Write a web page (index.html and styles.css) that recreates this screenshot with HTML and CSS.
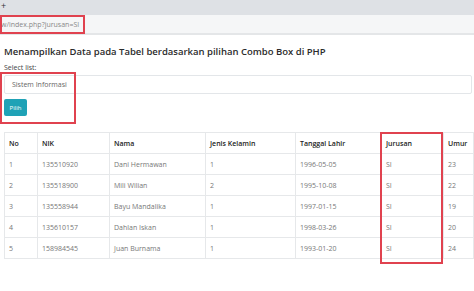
FILE: index.html
```html
<!DOCTYPE html>
<html>
<head>
<meta charset="utf-8">
<link rel="stylesheet" href="styles.css">
</head>
<body>
<div class="tabbar"><span class="plus">+</span></div>
<div class="addrbar"><span class="url">w/index.php?jurusan=SI</span></div>
<div class="page">
  <h4 class="title">Menampilkan Data pada Tabel berdasarkan pilihan Combo Box di PHP</h4>
  <div class="label">Select list:</div>
  <div class="select">Sistem Informasi</div>
  <div class="btn">Pilih</div>
  <table class="data">
    <thead>
      <tr><th class="c-no">No</th><th class="c-nik">NIK</th><th class="c-nama">Nama</th><th class="c-jk">Jenis Kelamin</th><th class="c-tgl">Tanggal Lahir</th><th class="c-jur">Jurusan</th><th class="c-umur">Umur</th></tr>
    </thead>
    <tbody>
      <tr><td>1</td><td>135510920</td><td>Dani Hermawan</td><td>1</td><td>1996-05-05</td><td>SI</td><td>23</td></tr>
      <tr><td>2</td><td>135518900</td><td>Mili Wilian</td><td>2</td><td>1995-10-08</td><td>SI</td><td>22</td></tr>
      <tr><td>3</td><td>135558944</td><td>Bayu Mandalika</td><td>1</td><td>1997-01-15</td><td>SI</td><td>19</td></tr>
      <tr><td>4</td><td>135610157</td><td>Dahlan Iskan</td><td>1</td><td>1998-03-26</td><td>SI</td><td>20</td></tr>
      <tr><td>5</td><td>158984545</td><td>Juan Burnama</td><td>1</td><td>1993-01-20</td><td>SI</td><td>24</td></tr>
    </tbody>
  </table>
</div>
<div class="hl hl-url"></div>
<div class="hl hl-select"></div>
<div class="hl hl-jur"></div>
</body>
</html>
```
FILE: styles.css
```css
html, body { margin: 0; padding: 0; background: #fff; }
body { font-family: "Open Sans", "Noto Sans", sans-serif; color: #212529; width: 474px; height: 291px; overflow: hidden; position: relative; }
.tabbar { height: 15px; background: #dee1e5; display: flex; align-items: flex-start; }
.plus { margin-left: 1px; margin-top: 1px; font-size: 9px; line-height: 9px; color: #333; }
.addrbar { height: 18px; background: #f5f6f7; border-bottom: 2px solid #e4e6e8; display: flex; align-items: center; }
.url { font-size: 7px; color: #888; padding-left: 1px; }
.page { padding: 8px 2px 0 4px; }
.title { margin: 0; font-size: 9.5px; font-weight: 600; line-height: 18px; color: #2b2b2b; }
.label { font-size: 7px; color: #444; margin-top: 2px; line-height: 9px; }
.select { margin-top: 3px; height: 17px; border: 1px solid #e3e6e9; border-radius: 2px; font-size: 7px; color: #666; display: flex; align-items: center; padding-left: 7px; }
.btn { margin-top: 5px; width: 23px; height: 17px; background: #1fa2b6; border-radius: 2px; color: #fff; font-size: 6px; display: flex; align-items: center; justify-content: center; }
.data { margin-top: 16px; border-collapse: collapse; width: 470px; }
.data th, .data td { border: 1px solid #e6e8ea; font-size: 7px; line-height: 9px; text-align: left; padding: 0 0 0 4px; height: 20px; }
.data th { font-weight: 600; color: #222; }
.data td { color: #777; }
.c-no { width: 28px; }
.c-nik { width: 67px; }
.c-nama { width: 91px; }
.c-jk { width: 85px; }
.c-tgl { width: 81px; }
.c-jur { width: 57px; }
.hl { position: absolute; border: 2px solid #e0424f; box-sizing: border-box; }
.hl-url { left: 0; top: 15px; width: 85px; height: 19px; }
.hl-select { left: 0; top: 72px; width: 76px; height: 52px; }
.hl-jur { left: 380px; top: 132px; width: 63px; height: 132px; }
```
